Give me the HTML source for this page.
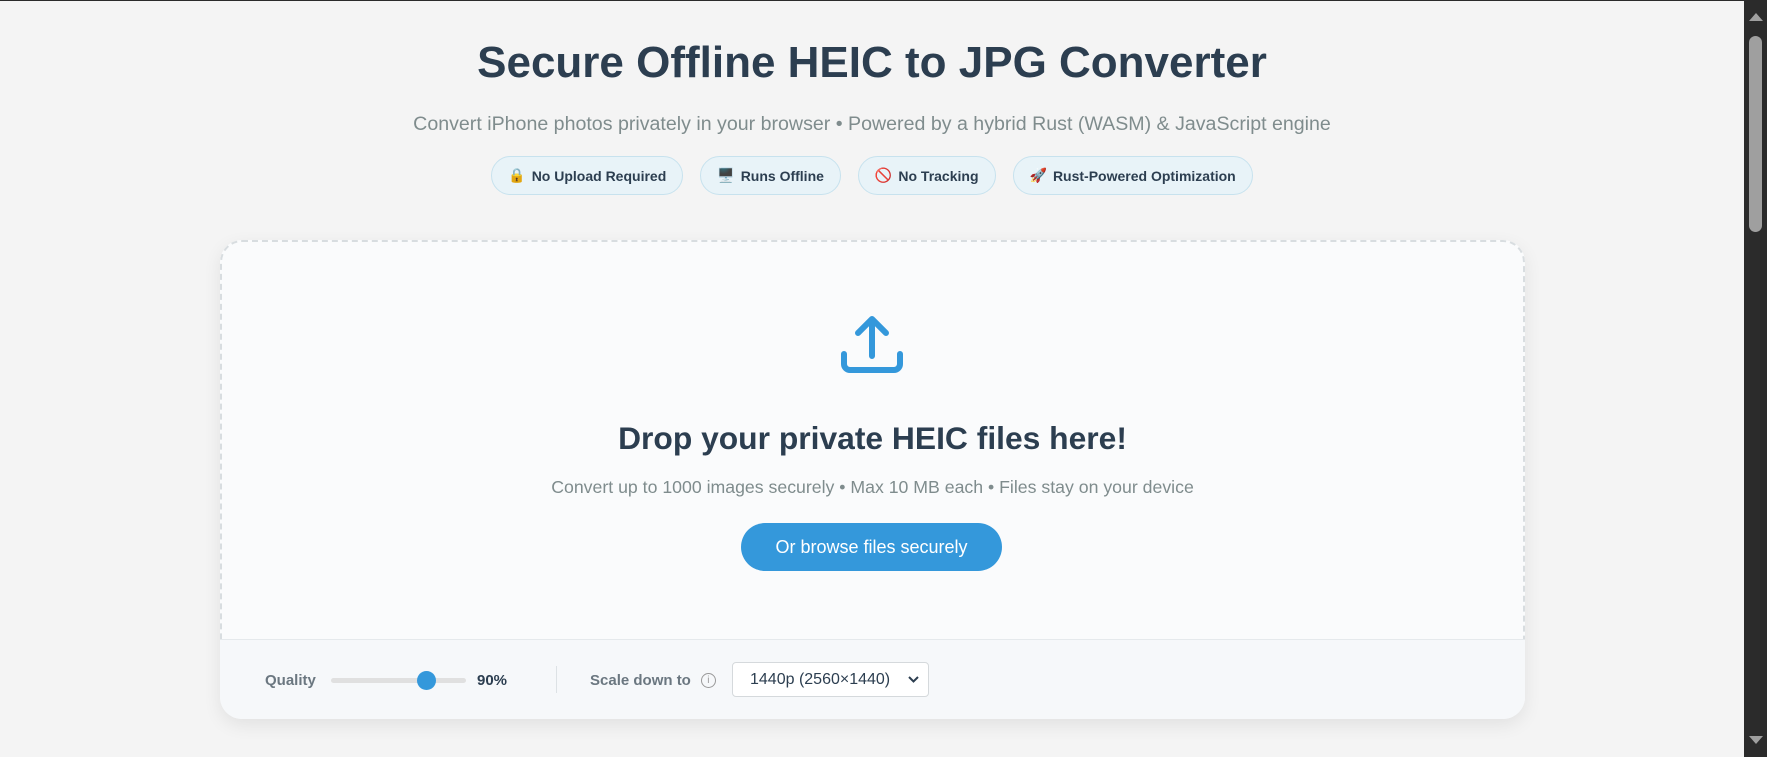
<!DOCTYPE html>
<html><head><meta charset="utf-8"><style>
*{box-sizing:border-box;margin:0;padding:0}
html,body{width:1767px;height:757px;overflow:hidden;background:#f4f4f4;font-family:"Liberation Sans",sans-serif}
.sb{position:absolute;left:1744px;top:0;width:23px;height:757px;background:#2b2b2b}
.sb .th{position:absolute;left:5px;top:36px;width:13px;height:196px;border-radius:7px;background:#9f9f9f}
.sb .up{position:absolute;left:5px;top:13px;width:0;height:0;border-left:7px solid transparent;border-right:7px solid transparent;border-bottom:8px solid #9f9f9f}
.sb .dn{position:absolute;left:5px;top:736px;width:0;height:0;border-left:7px solid transparent;border-right:7px solid transparent;border-top:8px solid #9f9f9f}
.topline{position:absolute;left:0;top:0;width:1744px;height:1px;background:#2b2b2b}
h1{position:absolute;left:0;width:1744px;top:38px;text-align:center;font-size:44px;font-weight:bold;color:#2c3e50}
.sub{position:absolute;left:0;width:1744px;top:113px;text-align:center;font-size:19.6px;color:#7f8c8d}
.badges{position:absolute;left:0;width:1744px;top:156px;display:flex;justify-content:center;gap:17px}
.b{height:39px;border:1px solid #c7e2ee;background:#e8f3f8;border-radius:20px;padding:0 16px;display:flex;align-items:center;font-size:14px;font-weight:bold;color:#2c3e50;gap:6px}
.card{position:absolute;left:220px;top:240px;width:1305px;height:479px;border-radius:22px;background:#fafbfc;box-shadow:0 6px 18px rgba(0,0,0,.08);overflow:hidden}
.dash{position:absolute;left:0;top:0;right:0;height:420px;border:2px dashed #d8dde0;border-bottom:none;border-radius:22px 22px 0 0}
.foot{position:absolute;left:0;top:399px;right:0;height:80px;background:#f6f8fa;border-top:1px solid #e5e9ec}
h2{position:absolute;left:0;width:1305px;top:180px;text-align:center;font-size:31.8px;font-weight:bold;color:#2c3e50}
.s2{position:absolute;left:0;width:1305px;top:237px;text-align:center;font-size:17.7px;color:#7f8c8d}
.btn{position:absolute;left:521px;top:283px;width:261px;height:48px;border-radius:24px;background:#3498db;color:#fff;font-size:18px;display:flex;align-items:center;justify-content:center}
.f{position:absolute;top:0;height:80px;display:flex;align-items:center;font-size:15px;font-weight:bold;color:#6b7780}
</style></head><body>
<div class="topline"></div>
<h1>Secure Offline HEIC to JPG Converter</h1>
<div class="sub">Convert iPhone photos privately in your browser • Powered by a hybrid Rust (WASM) &amp; JavaScript engine</div>
<div class="badges">
<div class="b"><span>🔒</span>No Upload Required</div>
<div class="b"><span>🖥️</span>Runs Offline</div>
<div class="b"><span style="color:#e74c3c">🚫</span>No Tracking</div>
<div class="b"><span>🚀</span>Rust-Powered Optimization</div>
</div>
<div class="card">
<div class="dash"></div>
<svg style="position:absolute;left:619px;top:72px" width="66" height="66" viewBox="0 0 66 66" fill="none" stroke="#3498db" stroke-width="6" stroke-linecap="round" stroke-linejoin="round"><path d="M33 44V8M19 21L33 7L47 21"/><path d="M5 42v10a6 6 0 0 0 6 6h44a6 6 0 0 0 6-6V42"/></svg>
<h2>Drop your private HEIC files here!</h2>
<div class="s2">Convert up to 1000 images securely • Max 10 MB each • Files stay on your device</div>
<div class="btn">Or browse files securely</div>
<div class="foot">
<div class="f" style="left:45px">Quality</div>
<div style="position:absolute;left:111px;top:38px;width:135px;height:5px;border-radius:3px;background:#e0e0e0"></div>
<div style="position:absolute;left:197px;top:31px;width:19px;height:19px;border-radius:50%;background:#3498db"></div>
<div class="f" style="left:257px;color:#2c3e50">90%</div>
<div style="position:absolute;left:336px;top:26px;width:1px;height:27px;background:#dde2e5"></div>
<div class="f" style="left:370px">Scale down to <span style="display:inline-block;margin-left:10px;width:15px;height:15px;border:1px solid #999;border-radius:50%;font-size:10px;font-weight:normal;text-align:center;line-height:13px;color:#999">i</span></div>
<div style="position:absolute;left:512px;top:22px;width:197px;height:35px;border:1px solid #d5d9dc;border-radius:4px;background:#fff;font-size:16px;color:#2c3e50;display:flex;align-items:center;padding-left:17px">1440p (2560×1440)<svg style="position:absolute;right:8px;top:12px" width="13" height="9" viewBox="0 0 13 9"><path d="M2 2l4.5 4.5L11 2" stroke="#2c3e50" stroke-width="2" fill="none"/></svg></div>
</div>
</div>
<div class="sb"><div class="up"></div><div class="th"></div><div class="dn"></div></div>
</body></html>
